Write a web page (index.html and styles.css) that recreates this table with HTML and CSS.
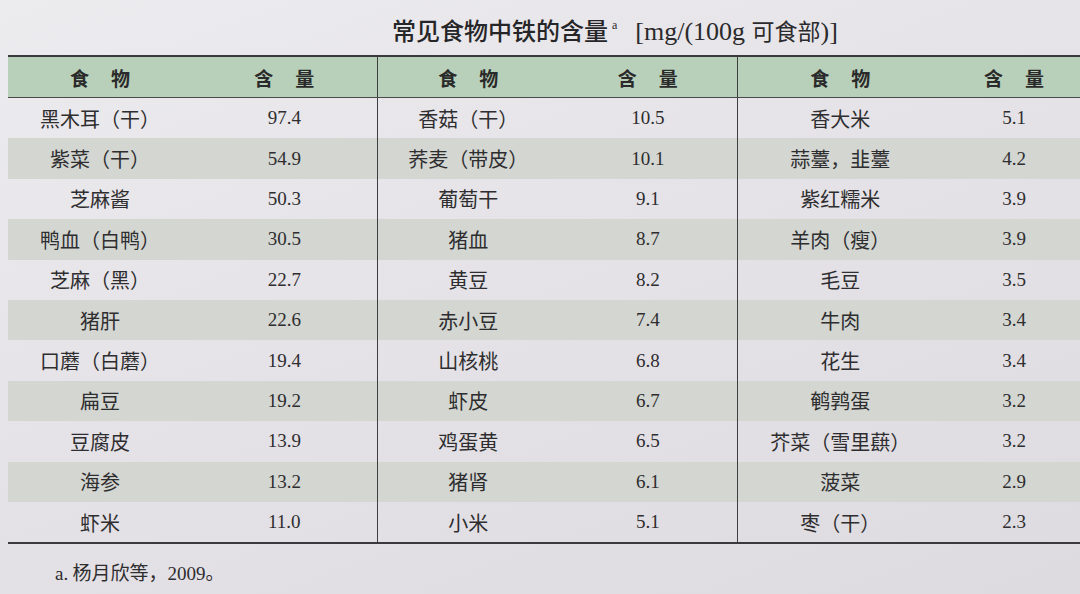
FILE: index.html
```html
<!DOCTYPE html>
<html lang="zh-CN">
<head>
<meta charset="utf-8">
<title>常见食物中铁的含量</title>
<link rel="stylesheet" href="styles.css">
</head>
<body>
<div class="page">
  <div class="title"><span class="title-cn">常见食物中铁的含量</span><sup class="note-mark">a</sup><span class="title-unit">[mg/(100g <span class="cn">可食部</span>)]</span></div>
  <table class="iron">
    <colgroup>
      <col class="c-food1"><col class="c-val1"><col class="c-food2"><col class="c-val2"><col class="c-food3"><col class="c-val3">
    </colgroup>
    <thead>
      <tr>
        <th>食物</th><th>含量</th><th class="div">食物</th><th>含量</th><th class="div">食物</th><th>含量</th>
      </tr>
    </thead>
    <tbody>
      <tr><td>黑木耳（干）</td><td class="n">97.4</td><td class="div">香菇（干）</td><td class="n">10.5</td><td class="div">香大米</td><td class="n">5.1</td></tr>
      <tr class="sh"><td>紫菜（干）</td><td class="n">54.9</td><td class="div">荞麦（带皮）</td><td class="n">10.1</td><td class="div">蒜薹，韭薹</td><td class="n">4.2</td></tr>
      <tr><td>芝麻酱</td><td class="n">50.3</td><td class="div">葡萄干</td><td class="n">9.1</td><td class="div">紫红糯米</td><td class="n">3.9</td></tr>
      <tr class="sh"><td>鸭血（白鸭）</td><td class="n">30.5</td><td class="div">猪血</td><td class="n">8.7</td><td class="div">羊肉（瘦）</td><td class="n">3.9</td></tr>
      <tr><td>芝麻（黑）</td><td class="n">22.7</td><td class="div">黄豆</td><td class="n">8.2</td><td class="div">毛豆</td><td class="n">3.5</td></tr>
      <tr class="sh"><td>猪肝</td><td class="n">22.6</td><td class="div">赤小豆</td><td class="n">7.4</td><td class="div">牛肉</td><td class="n">3.4</td></tr>
      <tr><td>口蘑（白蘑）</td><td class="n">19.4</td><td class="div">山核桃</td><td class="n">6.8</td><td class="div">花生</td><td class="n">3.4</td></tr>
      <tr class="sh"><td>扁豆</td><td class="n">19.2</td><td class="div">虾皮</td><td class="n">6.7</td><td class="div">鹌鹑蛋</td><td class="n">3.2</td></tr>
      <tr><td>豆腐皮</td><td class="n">13.9</td><td class="div">鸡蛋黄</td><td class="n">6.5</td><td class="div">芥菜（雪里蕻）</td><td class="n">3.2</td></tr>
      <tr class="sh"><td>海参</td><td class="n">13.2</td><td class="div">猪肾</td><td class="n">6.1</td><td class="div">菠菜</td><td class="n">2.9</td></tr>
      <tr><td>虾米</td><td class="n">11.0</td><td class="div">小米</td><td class="n">5.1</td><td class="div">枣（干）</td><td class="n">2.3</td></tr>
    </tbody>
  </table>
  <p class="footnote"><span class="lat">a.</span> 杨月欣等，<span class="lat">2009</span>。</p>
</div>
</body>
</html>
```

FILE: styles.css
```css
html, body {
  margin: 0;
  padding: 0;
  width: 1080px;
  height: 594px;
  overflow: hidden;
}

body {
  background: linear-gradient(160deg, #ecebee 0%, #e5e3e7 45%, #dedbe0 100%);
  color: #2b2a2c;
  font-family: "Noto Sans CJK SC", "Noto Sans", sans-serif;
}

.page {
  padding-left: 8px;
  width: 1100px;
}

.title {
  height: 55px;
  box-sizing: border-box;
  padding-top: 9px;
  padding-left: 384px;
  font-size: 24px;
  line-height: 32px;
  white-space: nowrap;
}

.title-cn {
  font-family: "Noto Sans CJK SC", sans-serif;
  font-weight: 500;
  color: #262527;
}

.note-mark {
  font-family: "Liberation Serif", serif;
  font-size: 12px;
  vertical-align: 11px;
  margin-left: 4px;
  margin-right: 18px;
}

.title-unit {
  font-family: "Liberation Serif", serif;
  font-size: 26px;
  color: #2b2a2c;
}

.title-unit .cn {
  font-family: "Noto Sans CJK SC", sans-serif;
  font-size: 23px;
}

.iron {
  border-collapse: collapse;
  table-layout: fixed;
  width: 1077px;
  border-top: 2px solid #3a393b;
  border-bottom: 2px solid #3a393b;
}

.c-food1 { width: 184px; }
.c-val1 { width: 185px; }
.c-food2 { width: 182px; }
.c-val2 { width: 178px; }
.c-food3 { width: 206px; }
.c-val3 { width: 142px; }

.iron th {
  height: 40px;
  padding: 0;
  background: #b8d0b9;
  border-bottom: 1px solid #4a4a4a;
  font-family: "Noto Sans CJK SC", sans-serif;
  font-weight: 700;
  font-size: 19px;
  letter-spacing: 22px;
  text-indent: 22px;
  color: #2a2a2a;
  text-align: center;
}

.iron td {
  height: 40.4px;
  padding: 0;
  text-align: center;
  font-size: 20px;
  font-weight: 400;
  color: #2e2d2f;
  white-space: nowrap;
}

.iron td.n {
  font-family: "Liberation Serif", serif;
  font-size: 19px;
}

.iron .div {
  border-left: 1.5px solid #3e3d3f;
}

.iron tr.sh td {
  background: #d3d6d1;
}

.footnote {
  margin: 16px 0 0 47px;
  font-size: 19px;
  line-height: 24px;
  color: #2e2d2f;
}

.footnote .lat {
  font-family: "Liberation Serif", serif;
  font-size: 19px;
}
```
